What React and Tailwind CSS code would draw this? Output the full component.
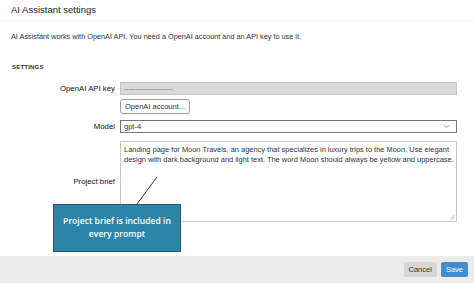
import { ChevronDown } from 'lucide-react'

export default function App() {
  const sans = { fontFamily: '"Liberation Sans", Arial, sans-serif' }

  return (
    <div className="relative w-[474px] h-[283px] bg-white overflow-hidden text-[#222]" style={sans}>
      {/* header */}
      <div className="h-[21px] border-b border-[#eeeeee] flex items-center px-[11px]">
        <span className="text-[9.5px] font-medium text-[#222]">AI Assistant settings</span>
      </div>

      <p className="px-[11px] mt-[11px] text-[7.3px] leading-[10px] text-[#333]">
        AI Assistant works with OpenAI API. You need a OpenAI account and an API key to use it.
      </p>

      <div className="px-[12px] mt-[21px] text-[6px] font-bold tracking-[0.2px] text-[#333]">SETTINGS</div>

      {/* form */}
      <div className="mt-[10px] grid grid-cols-[115px_337px] gap-x-[5px] items-start leading-none">
        <div className="text-right text-[7.8px] font-medium h-[13px] leading-[13px] text-[#111]">OpenAI API key</div>
        <div className="h-[13px] bg-[#dadada] border border-[#c4c4c4] text-[7px] leading-[11px] px-[3px] text-[#666]">
          ---------------------
        </div>

        <div />
        <div className="mt-[4px] flex">
          <button className="h-[15px] px-[4px] border border-[#9a9a9a] rounded-[3px] bg-white text-[7.5px] leading-[13px] text-[#333]">
            OpenAI account...
          </button>
        </div>

        <div className="mt-[6px] text-right text-[7.8px] font-medium h-[13px] leading-[13px] text-[#111]">Model</div>
        <div className="mt-[6px] h-[13px] border border-[#777] bg-white flex items-center justify-between px-[3px]">
          <span className="text-[7.5px] text-[#333]">gpt-4</span>
          <ChevronDown size={9} strokeWidth={1.5} className="text-[#555] mr-[2px]" />
        </div>

        <div className="mt-[8px] text-right text-[7.8px] font-medium pt-[37px] text-[#111]">Project brief</div>
        <div className="mt-[8px] relative h-[81px] border border-[#c8c8c8] bg-white px-[3px] pt-[3px] text-[7.45px] leading-[10px] text-[#333] whitespace-nowrap">
          Landing page for Moon Travels, an agency that specializes in luxury trips to the Moon. Use elegant
          <br />
          design with dark background and light text. The word Moon should always be yellow and uppercase.
          <svg className="absolute right-[1px] bottom-[1px]" width="6" height="6" viewBox="0 0 6 6">
            <path d="M1 5.5 L5.5 1 M3.5 5.5 L5.5 3.5" stroke="#999" strokeWidth="0.7" />
          </svg>
        </div>
      </div>

      {/* callout */}
      <svg className="absolute left-0 top-0 pointer-events-none" width="474" height="283">
        <line x1="157" y1="177" x2="137" y2="204" stroke="#222" strokeWidth="0.9" />
      </svg>
      <div
        className="absolute left-[53px] top-[204px] w-[128px] h-[48px] bg-[#2c84a8] border border-[#1f5a74] flex items-center justify-center text-center text-white text-[8.6px] font-semibold leading-[13px] px-[4px]"
        style={{ fontFamily: '"Open Sans", sans-serif' }}
      >
        Project brief is included in every prompt
      </div>

      {/* footer */}
      <div className="absolute left-0 right-0 bottom-0 h-[27px] bg-[#ececec] flex items-center justify-end gap-[4px] pr-[6px]">
        <button className="h-[15px] px-[5px] bg-[#d6d6d6] rounded-[2px] text-[7.5px] text-[#333]">Cancel</button>
        <button className="h-[15px] px-[5px] bg-[#3d8fd1] rounded-[2px] text-[7.5px] text-white">Save</button>
      </div>
    </div>
  )
}
